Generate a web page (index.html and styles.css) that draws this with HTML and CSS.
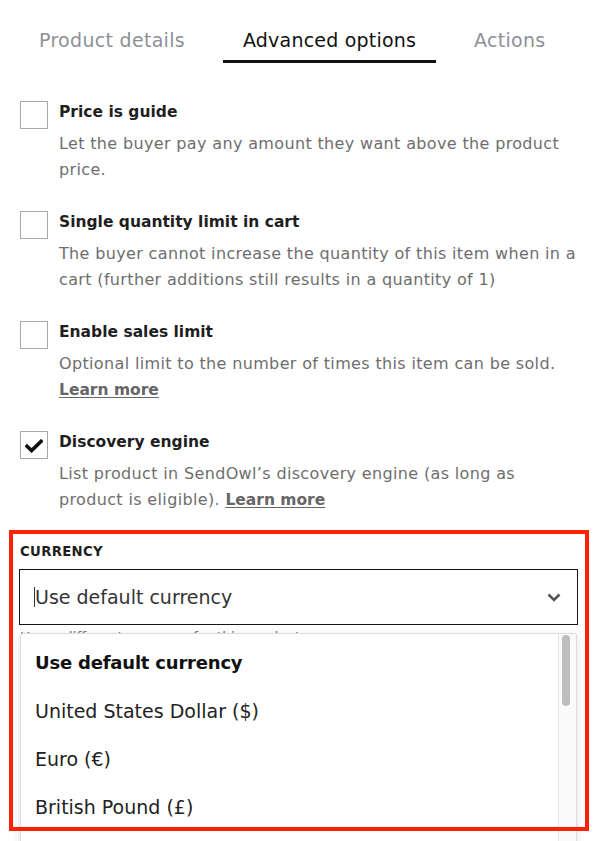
FILE: index.html
```html
<!DOCTYPE html>
<html lang="en">
<head>
<meta charset="utf-8">
<title>Advanced options</title>
<link rel="stylesheet" href="styles.css">
</head>
<body>
<div class="page">
  <nav class="tabs">
    <div class="tab">Product details</div>
    <div class="tab active">Advanced options</div>
    <div class="tab">Actions</div>
  </nav>

  <div class="options">
    <div class="opt">
      <span class="box"></span>
      <div class="opt-text">
        <div class="title">Price is guide</div>
        <div class="desc">Let the buyer pay any amount they want above the product<br>price.</div>
      </div>
    </div>
    <div class="opt">
      <span class="box"></span>
      <div class="opt-text">
        <div class="title">Single quantity limit in cart</div>
        <div class="desc">The buyer cannot increase the quantity of this item when in a<br>cart (further additions still results in a quantity of 1)</div>
      </div>
    </div>
    <div class="opt">
      <span class="box"></span>
      <div class="opt-text">
        <div class="title">Enable sales limit</div>
        <div class="desc">Optional limit to the number of times this item can be sold.<br><a class="link" href="#">Learn more</a></div>
      </div>
    </div>
    <div class="opt">
      <span class="box checked">
        <svg width="18" height="14" viewBox="0 0 18 14"><path d="M2 7.2 L6.6 11.6 L16 2.4" fill="none" stroke="#111" stroke-width="3.6" stroke-linecap="square" stroke-linejoin="miter"/></svg>
      </span>
      <div class="opt-text">
        <div class="title">Discovery engine</div>
        <div class="desc">List product in SendOwl’s discovery engine (as long as<br>product is eligible). <a class="link" href="#">Learn more</a></div>
      </div>
    </div>
  </div>

  <section class="currency">
    <div class="highlight"></div>
    <div class="label">CURRENCY</div>
    <div class="select-wrap">
      <div class="select">
        <span class="caret"></span><span class="value">Use default currency</span>
        <svg class="chev" width="14" height="9" viewBox="0 0 14 9"><path d="M1.5 1.5 L7 7 L12.5 1.5" fill="none" stroke="#555" stroke-width="2.6"/></svg>
      </div>
      <div class="help">Use a different currency for this product</div>
      <div class="menu">
        <ul class="menu-list">
          <li class="item selected">Use default currency</li>
          <li class="item">United States Dollar ($)</li>
          <li class="item">Euro (€)</li>
          <li class="item">British Pound (£)</li>
        </ul>
        <div class="track"><div class="thumb"></div></div>
      </div>
    </div>
  </section>
</div>
</body>
</html>
```

FILE: styles.css
```css
html, body {
  margin: 0;
  padding: 0;
  background: #fff;
}
body {
  font-family: "DejaVu Sans", "Open Sans", sans-serif;
  color: #222;
  overflow: hidden;
  height: 841px;
}
.page {
  width: 558px;
  padding-left: 20px;
}
.tabs {
  display: flex;
  gap: 18px;
  margin-left: -1px;
}
.tab {
  padding: 26px 20px 6px;
  line-height: 28px;
  font-size: 19px;
  letter-spacing: 0.3px;
  color: #8d9197;
  border-bottom: 3px solid transparent;
  white-space: nowrap;
}
.tab.active {
  color: #111;
  border-bottom-color: #111;
  letter-spacing: 0.2px;
}
.options {
  margin-top: 38px;
  display: flex;
  flex-direction: column;
  gap: 28px;
}
.opt {
  display: flex;
  gap: 11px;
}
.box {
  flex: 0 0 auto;
  width: 28px;
  height: 28px;
  box-sizing: border-box;
  border: 1px solid #a8a8a8;
  display: flex;
  align-items: center;
  justify-content: center;
}
.box svg {
  margin-top: 2px;
}
.title {
  font-weight: bold;
  font-size: 15.5px;
  line-height: 22px;
  color: #1f1f1f;
}
.desc {
  margin-top: 8px;
  font-size: 16px;
  letter-spacing: 0.35px;
  line-height: 26px;
  color: #6e6e6e;
  white-space: nowrap;
}
.link {
  font-weight: bold;
  font-size: 15.5px;
  letter-spacing: 0;
  color: #666;
  text-decoration: underline;
  text-underline-offset: 2px;
}
.currency {
  position: relative;
  margin-top: 31px;
}
.highlight {
  position: absolute;
  top: -14px;
  left: -11px;
  right: -11px;
  height: 301px;
  box-sizing: border-box;
  border: 4px solid #ff2200;
  z-index: 5;
  pointer-events: none;
}
.label {
  font-weight: bold;
  font-size: 13.3px;
  letter-spacing: 0.3px;
  line-height: 16px;
  color: #1f1f1f;
}
.select-wrap {
  position: relative;
  margin-top: 9px;
  margin-left: -1px;
}
.select {
  height: 56px;
  box-sizing: border-box;
  border: 1px solid #151515;
  display: flex;
  align-items: center;
  padding: 0 16px 0 14px;
}
.caret {
  width: 1px;
  height: 20px;
  background: #333;
}
.value {
  flex: 1;
  font-size: 19px;
  color: #333;
}
.help {
  margin-top: 2px;
  margin-left: 1px;
  font-size: 14px;
  line-height: 20px;
  color: #777;
}
.menu {
  position: absolute;
  top: 64px;
  left: 1px;
  right: 1px;
  height: 240px;
  box-sizing: border-box;
  border: 1px solid #dcdcdc;
  border-radius: 3px 3px 0 0;
  background: #fff;
  box-shadow: 0 2px 8px rgba(0, 0, 0, 0.12);
  display: flex;
  overflow: hidden;
  z-index: 2;
}
.menu-list {
  list-style: none;
  margin: 0;
  padding: 5px 0 0;
  flex: 1;
}
.item {
  height: 48px;
  line-height: 48px;
  padding-left: 14px;
  font-size: 19px;
  color: #222;
  white-space: nowrap;
}
.item.selected {
  font-weight: bold;
  font-size: 18px;
  letter-spacing: -0.2px;
  color: #111;
}
.track {
  flex: 0 0 14px;
  border-left: 1px solid #e6e6e6;
  background: #fafafa;
  padding: 1px 0 0 3px;
}
.thumb {
  width: 8px;
  height: 71px;
  border-radius: 4px;
  background: #bdbdbd;
}
```
